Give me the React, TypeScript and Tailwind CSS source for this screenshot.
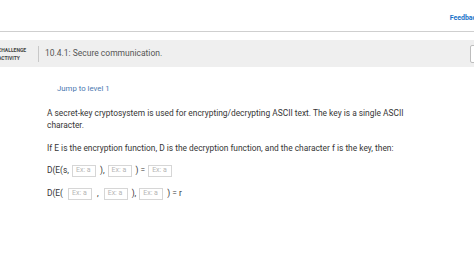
import React from "react";

function Inp() {
  return (
    <span className="inline-flex items-center h-[12px] w-[24px] border border-[#d6d6d6] bg-white px-[3px] text-[7px] text-[#b5b5b5] leading-none">
      Ex: a
    </span>
  );
}

export default function App() {
  return (
    <div className="w-[474px] h-[268px] bg-white overflow-hidden relative text-[#363636]" style={{ fontFamily: "Roboto, 'Liberation Sans', sans-serif" }}>
      <div className="h-[32px] flex items-end justify-end pb-[8px] border-b border-[#cfcfcf]">
        <span className="text-[7px] font-bold text-[#1a73c9] -mr-[6px]">Feedback</span>
      </div>
      <div className="mt-[8px] h-[27px] bg-[#efefef] flex items-center">
        <div className="flex flex-col text-[5px] font-bold leading-[8px] text-[#444] -ml-[2px] w-[40px]">
          <span>CHALLENGE</span>
          <span>ACTIVITY</span>
        </div>
        <div className="w-px h-[16px] bg-[#c8c8c8]" />
        <span className="ml-[6px] text-[8.5px] text-[#555]">10.4.1: Secure communication.</span>
        <div className="ml-auto mr-[-10px] w-[14px] h-[18px] bg-white border border-[#bdbdbd] rounded-[2px]" />
      </div>
      <div className="pl-[47px] pt-[16px] text-[8.4px]">
        <div className="pl-[10px] text-[7.8px] text-[#4a78b0]">Jump to level 1</div>
        <p className="mt-[12px] leading-[12px] w-[362px]">
          A secret-key cryptosystem is used for encrypting/decrypting ASCII text. The key is a single ASCII character.
        </p>
        <p className="mt-[11px] leading-[12px]">
          If E is the encryption function, D is the decryption function, and the character f is the key, then:
        </p>
        <div className="mt-[11px] flex items-center gap-[3px] h-[12px]">
          <span>D(E(s,</span>
          <Inp />
          <span className="ml-[1px]">),</span>
          <Inp />
          <span className="ml-[1px]">) =</span>
          <Inp />
        </div>
        <div className="mt-[11px] flex items-center gap-[3px] h-[12px]">
          <span className="mr-[2px]">D(E(</span>
          <Inp />
          <span className="mx-[2px]">,</span>
          <Inp />
          <span className="ml-[1px]">),</span>
          <Inp />
          <span className="ml-[1px]">) = r</span>
        </div>
      </div>
    </div>
  );
}
